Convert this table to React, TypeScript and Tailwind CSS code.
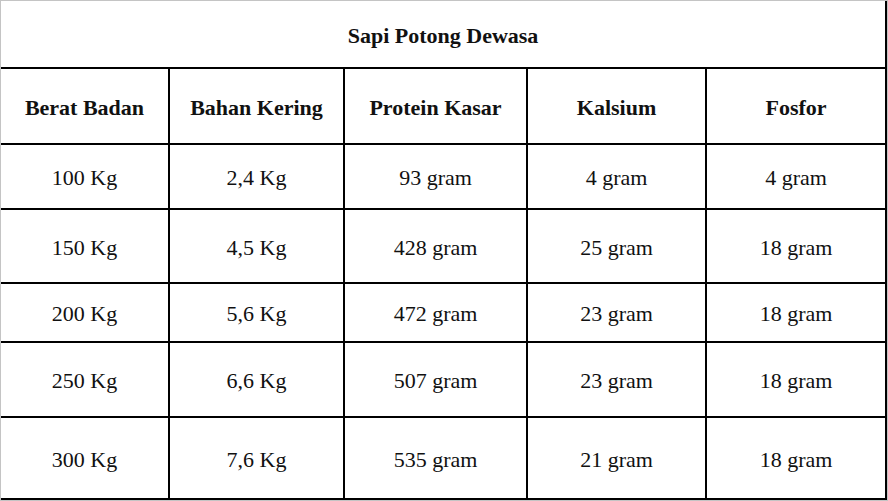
import React from "react";

const cols = ["w-[169px]", "w-[175px]", "w-[183px]", "w-[179px]", "w-[180px]"];
const headers = ["Berat Badan", "Bahan Kering", "Protein Kasar", "Kalsium", "Fosfor"];
const rows: { h: string; cells: string[] }[] = [
  { h: "h-[65px]", cells: ["100 Kg", "2,4 Kg", "93 gram", "4 gram", "4 gram"] },
  { h: "h-[74px]", cells: ["150 Kg", "4,5 Kg", "428 gram", "25 gram", "18 gram"] },
  { h: "h-[59px]", cells: ["200 Kg", "5,6 Kg", "472 gram", "23 gram", "18 gram"] },
  { h: "h-[75px]", cells: ["250 Kg", "6,6 Kg", "507 gram", "23 gram", "18 gram"] },
  { h: "h-[82px]", cells: ["300 Kg", "7,6 Kg", "535 gram", "21 gram", "18 gram"] },
];

export default function App() {
  return (
    <div
      className="w-[888px] h-[501px] bg-white border border-[#c4c4c4] text-[#111] flex flex-col"
      style={{ fontFamily: '"Liberation Serif", "Times New Roman", serif' }}
    >
      <div className="h-[68px] border-b-2 border-r-2 border-black flex items-center justify-center pt-[2px] text-[22px] font-bold">
        Sapi Potong Dewasa
      </div>
      <div className="h-[76px] flex">
        {headers.map((t, i) => (
          <div
            key={t}
            className={`${cols[i]} h-full border-b-2 border-r-2 border-black flex items-center justify-center pt-[3px] text-[22px] font-bold`}
          >
            {t}
          </div>
        ))}
      </div>
      {rows.map((r, ri) => (
        <div key={ri} className={`${r.h} flex`}>
          {r.cells.map((t, i) => (
            <div
              key={i}
              className={`${cols[i]} h-full border-b-2 border-r-2 border-black flex items-center justify-center pt-[2px] text-[22px]`}
            >
              {t}
            </div>
          ))}
        </div>
      ))}
    </div>
  );
}
